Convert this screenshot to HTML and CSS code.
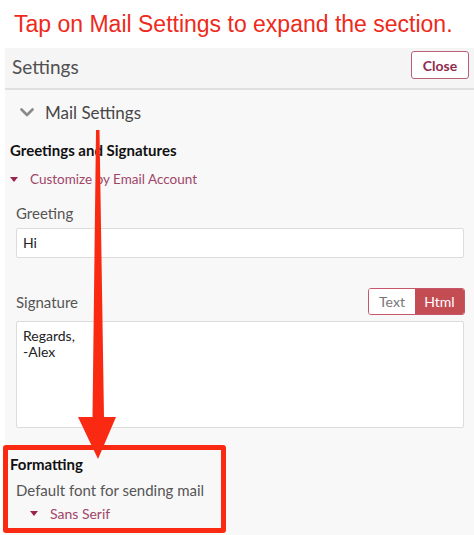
FILE: index.html
```html
<!DOCTYPE html>
<html lang="en">
    <head>
        <link rel="stylesheet" href="styles.css">
    </head>
    <body>
        <p class="caption">Tap on Mail Settings to expand the section.</p>
        <div class="panel">
            <div class="header">
                <span class="title">Settings</span>
                <button class="close">Close</button>
            </div>
            <div class="toggle-row">
                <svg class="chevron" width="14" height="9" viewBox="0 0 14 9">
                    <path d="M1.5 1.5 L7 7 L12.5 1.5" fill="none" stroke="#8a8a8a" stroke-width="2.6" stroke-linecap="round" stroke-linejoin="round"/>
                </svg>
                <span>Mail Settings</span>
            </div>
            <h3 class="group">Greetings and Signatures</h3>
            <div class="dropdown"><span class="tri"></span>Customize by Email Account</div>
            <div class="field">
                <div class="label">Greeting</div>
                <div class="input">Hi</div>
            </div>
            <div class="field">
                <div class="label-row">
                    <div class="label">Signature</div>
                    <div class="switch">
                        <span class="opt">Text</span>
                        <span class="opt on">Html</span>
                    </div>
                </div>
                <div class="textarea">Regards,<br>-Alex</div>
            </div>
            <h3 class="group fmt">Formatting</h3>
            <div class="label sub">Default font for sending mail</div>
            <div class="dropdown font"><span class="tri"></span>Sans Serif</div>
        </div>

        <div class="highlight"></div>
        <svg class="arrow" width="474" height="535" viewBox="0 0 474 535">
            <polygon points="96,130 99.5,130 104,417 116,417 98,459 78,417 92.5,417" fill="#fa2a12"/>
        </svg>
    </body>
</html>
```

FILE: styles.css
```css
body {
    margin: 0;
    width: 474px;
    height: 535px;
    overflow: hidden;
    background: #fff;
    font-family: "Lato", "Open Sans", sans-serif;
    position: relative;
}
.caption {
    margin: 0;
    height: 48px;
    padding-left: 14px;
    box-sizing: border-box;
    padding-top: 10px;
    font-family: "Liberation Sans", Arial, sans-serif;
    font-size: 23px;
    line-height: 28px;
    color: #ee2a1c;
}
.panel {
    margin-left: 5px;
    background: #f9f8f9;
    height: 487px;
    padding-right: 10px;
}
.header {
    height: 40px;
    display: flex;
    align-items: center;
    justify-content: space-between;
    padding-left: 7px;
    padding-right: 0;
    border-bottom: 2px solid #e0dfe0;
    background: #f6f5f6;
    margin-right: -10px;
}
.title {
    font-size: 19px;
    color: #505050;
    margin-top: -3px;
}
.close {
    width: 58px;
    height: 28px;
    margin-right: 5px;
    margin-top: -6px;
    background: #fff;
    border: 1.5px solid #b76078;
    border-radius: 3px;
    color: #8f2c4c;
    font-family: "Lato", sans-serif;
    font-weight: bold;
    font-size: 14px;
    padding: 0;
}
.toggle-row {
    height: 44px;
    display: flex;
    align-items: center;
    padding-left: 15px;
    font-size: 17px;
    color: #474747;
}
.chevron {
    margin-right: 11px;
    margin-top: 1px;
}
.group {
    margin: 5px 0 0 5px;
    font-size: 15px;
    font-weight: bold;
    color: #111;
    height: 22px;
    line-height: 22px;
}
.dropdown {
    display: flex;
    align-items: center;
    height: 22px;
    margin-top: 7px;
    padding-left: 5px;
    font-size: 13.5px;
    color: #a04567;
}
.tri {
    width: 0;
    height: 0;
    border-left: 4.5px solid transparent;
    border-right: 4.5px solid transparent;
    border-top: 5px solid #9b2350;
    margin-right: 12px;
}
.field {
    padding-left: 11px;
}
.label {
    font-size: 15px;
    color: #555;
    height: 22px;
    line-height: 22px;
}
.dropdown + .field {
    margin-top: 12px;
}
.input {
    margin-top: 4px;
    height: 30px;
    box-sizing: border-box;
    background: #fff;
    border: 1px solid #dcdcdc;
    border-radius: 2px;
    padding-left: 6px;
    font-size: 14px;
    line-height: 28px;
    color: #222;
}
.field + .field {
    margin-top: 30px;
}
.label-row {
    display: flex;
    align-items: center;
    justify-content: space-between;
    height: 27px;
    margin-right: -1px;
}
.switch {
    display: flex;
    height: 27px;
    border: 1px solid #c6566a;
    border-radius: 3px;
    overflow: hidden;
    box-sizing: border-box;
}
.opt {
    width: 46px;
    display: flex;
    align-items: center;
    justify-content: center;
    font-size: 14px;
    color: #777;
    background: #fff;
}
.opt.on {
    width: 49px;
    background: #c44d54;
    color: #fff;
}
.textarea {
    margin-top: 6px;
    height: 107px;
    box-sizing: border-box;
    background: #fff;
    border: 1px solid #dcdcdc;
    border-radius: 2px;
    padding: 6px 6px;
    font-size: 14px;
    line-height: 16px;
    color: #222;
}
.group.fmt {
    margin-top: 25px;
}
.sub {
    padding-left: 11px;
    margin-top: 4px;
}
.dropdown.font {
    margin-top: 1px;
    padding-left: 25px;
    font-size: 14px;
}
.highlight {
    position: absolute;
    left: 3px;
    top: 445px;
    width: 223px;
    height: 88px;
    box-sizing: border-box;
    border: 5px solid #fa2a12;
    border-radius: 3px;
}
.arrow {
    position: absolute;
    left: 0;
    top: 0;
}
```
